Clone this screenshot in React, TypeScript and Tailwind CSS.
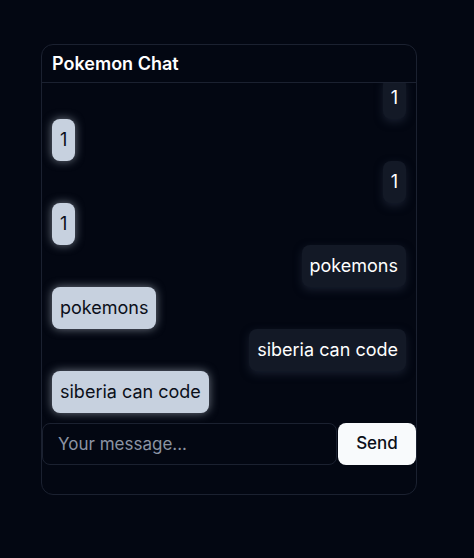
import React from "react";

interface Message {
  id: number;
  text: string;
  mine: boolean;
}

const messages: Message[] = [
  { id: 1, text: "1", mine: true },
  { id: 2, text: "1", mine: false },
  { id: 3, text: "1", mine: true },
  { id: 4, text: "1", mine: false },
  { id: 5, text: "pokemons", mine: true },
  { id: 6, text: "pokemons", mine: false },
  { id: 7, text: "siberia can code", mine: true },
  { id: 8, text: "siberia can code", mine: false },
];

const App: React.FC = () => {
  return (
    <main
      className="min-h-screen w-full bg-[#030712] pt-[44px] pl-[41px]"
      style={{ fontFamily: "Inter, 'Noto Sans', sans-serif" }}
    >
      <section className="w-[376px] h-[451px] border border-[#1b2130] rounded-xl flex flex-col">
        <h2 className="h-[38px] shrink-0 flex items-center px-2.5 text-[18px] font-semibold text-white border-b border-[#1b2130]">
          Pokemon Chat
        </h2>
        <div className="h-[340px] overflow-hidden flex flex-col justify-end px-2.5 pb-[10px]">
          <ul className="flex flex-col">
            {messages.map((msg) => (
              <li
                key={msg.id}
                className={`flex ${msg.mine ? "justify-end" : "justify-start"}`}
              >
                <span
                  className={`px-2 py-[7px] text-[18px] leading-7 rounded-lg ${
                    msg.mine
                      ? "bg-[#131926] text-white shadow-[0_3px_8px_rgba(40,50,70,0.55)]"
                      : "bg-[#c7d1df] text-[#0b0f19] shadow-[0_0_10px_rgba(203,213,225,0.55)]"
                  }`}
                >
                  {msg.text}
                </span>
              </li>
            ))}
          </ul>
        </div>
        <form className="flex items-stretch h-[42px]" onSubmit={(e) => e.preventDefault()}>
          <label htmlFor="newMsg" className="sr-only">
            Your message
          </label>
          <input
            id="newMsg"
            type="text"
            placeholder="Your message..."
            autoComplete="off"
            className="flex-1 min-w-0 h-[42px] py-0 px-[15px] leading-[42px] bg-transparent border border-[#1b2130] rounded-lg text-[17px] text-white placeholder:text-[#8b93a3] outline-none"
          />
          <button
            type="submit"
            className="w-[78px] ml-px bg-[#f8fafc] text-[#0b0f19] text-[17px] font-medium rounded-lg"
          >
            Send
          </button>
        </form>
      </section>
    </main>
  );
};

export default App;
